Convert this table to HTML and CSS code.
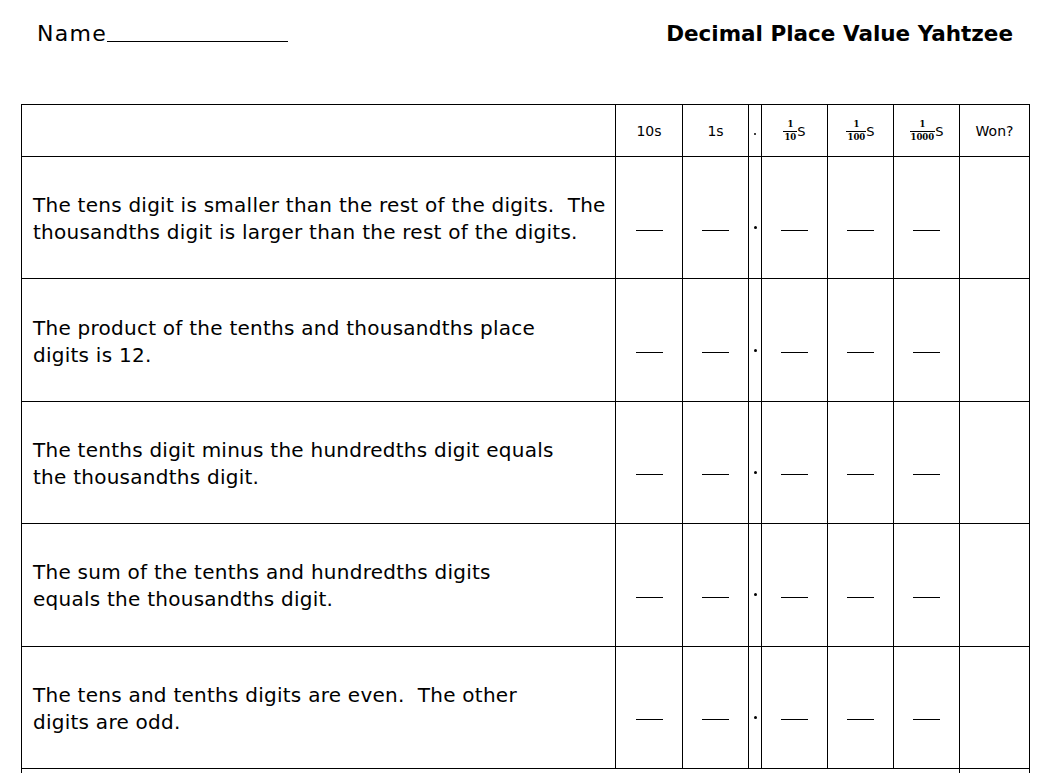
FILE: index.html
```html
<!DOCTYPE html>
<html lang="en">
<head>
<meta charset="utf-8">
<title>Decimal Place Value Yahtzee</title>
<link rel="stylesheet" href="styles.css">
</head>
<body>
<header class="top">
  <div class="name">Name<span class="name-line"></span></div>
  <h1 class="title">Decimal Place Value Yahtzee</h1>
</header>
<table class="sheet">
  <colgroup>
    <col class="c-text"><col class="c-10"><col class="c-1"><col class="c-dot"><col class="c-tenth"><col class="c-hund"><col class="c-thou"><col class="c-won">
  </colgroup>
  <thead>
    <tr>
      <th></th>
      <th class="h">10s</th>
      <th class="h">1s</th>
      <th class="hdot"><span class="pt pt-head"></span></th>
      <th class="h"><span class="frac"><span class="num">1</span><span class="den">10</span></span><span class="fs">S</span></th>
      <th class="h"><span class="frac"><span class="num">1</span><span class="den">100</span></span><span class="fs">S</span></th>
      <th class="h"><span class="frac"><span class="num">1</span><span class="den">1000</span></span><span class="fs">S</span></th>
      <th class="h won">Won?</th>
    </tr>
  </thead>
  <tbody>
    <tr>
      <td class="q">The tens digit is smaller than the rest of the digits.&nbsp; The<br>thousandths digit is larger than the rest of the digits.</td>
      <td><span class="blank"></span></td><td><span class="blank"></span></td><td class="d"><span class="pt"></span></td>
      <td><span class="blank"></span></td><td><span class="blank"></span></td><td><span class="blank"></span></td><td></td>
    </tr>
    <tr>
      <td class="q">The product of the tenths and thousandths place<br>digits is 12.</td>
      <td><span class="blank"></span></td><td><span class="blank"></span></td><td class="d"><span class="pt"></span></td>
      <td><span class="blank"></span></td><td><span class="blank"></span></td><td><span class="blank"></span></td><td></td>
    </tr>
    <tr>
      <td class="q">The tenths digit minus the hundredths digit equals<br>the thousandths digit.</td>
      <td><span class="blank"></span></td><td><span class="blank"></span></td><td class="d"><span class="pt"></span></td>
      <td><span class="blank"></span></td><td><span class="blank"></span></td><td><span class="blank"></span></td><td></td>
    </tr>
    <tr>
      <td class="q">The sum of the tenths and hundredths digits<br>equals the thousandths digit.</td>
      <td><span class="blank"></span></td><td><span class="blank"></span></td><td class="d"><span class="pt"></span></td>
      <td><span class="blank"></span></td><td><span class="blank"></span></td><td><span class="blank"></span></td><td></td>
    </tr>
    <tr>
      <td class="q">The tens and tenths digits are even.&nbsp; The other<br>digits are odd.</td>
      <td><span class="blank"></span></td><td><span class="blank"></span></td><td class="d"><span class="pt"></span></td>
      <td><span class="blank"></span></td><td><span class="blank"></span></td><td><span class="blank"></span></td><td></td>
    </tr>
    <tr>
      <td class="q" colspan="7"></td>
      <td></td>
    </tr>
  </tbody>
</table>
</body>
</html>
```
FILE: styles.css
```css
html, body {
  margin: 0;
  padding: 0;
  background: #fff;
  color: #000;
}
body {
  font-family: "DejaVu Sans", "Liberation Sans", sans-serif;
  width: 1040px;
  height: 773px;
  overflow: hidden;
}
.top {
  display: flex;
  justify-content: space-between;
  align-items: flex-end;
  padding: 21px 27px 0 37px;
  height: 26px;
}
.name {
  font-size: 22px;
  line-height: 26px;
  letter-spacing: 1.3px;
  display: flex;
  align-items: baseline;
}
.name-line {
  display: inline-block;
  width: 181px;
  border-bottom: 1px solid #000;
  margin-left: 0;
  position: relative;
  top: 1px;
}
.title {
  margin: 0;
  font-size: 21.5px;
  line-height: 26px;
  font-weight: bold;
}
.sheet {
  margin: 57px 0 0 21px;
  border-collapse: collapse;
  table-layout: fixed;
  width: 1009px;
}
.sheet th, .sheet td {
  border: 1px solid #000;
  padding: 0;
  text-align: center;
  vertical-align: middle;
}
.c-text { width: 594px; }
.c-10 { width: 67px; }
.c-1 { width: 66px; }
.c-dot { width: 13px; }
.c-tenth, .c-hund, .c-thou { width: 66px; }
.c-won { width: 70px; }
.sheet thead th {
  height: 51px;
  font-weight: normal;
  font-size: 14px;
}
.sheet tbody td {
  height: 121.4px;
}
.sheet tbody td.q {
  height: 118.4px;
  text-align: left;
  padding: 3px 0 0 11px;
  font-size: 20px;
  line-height: 27px;
  letter-spacing: 0.25px;
  white-space: nowrap;
}
.won { font-size: 15px; }
.blank {
  display: block;
  width: 27px;
  height: 25px;
  margin: 0 auto;
  border-bottom: 1px solid #000;
}
.pt {
  display: block;
  width: 3px;
  height: 3px;
  border-radius: 50%;
  background: #000;
  margin: 20px auto 0;
}
.pt-head {
  width: 2px;
  height: 2px;
  margin-top: 6px;
}
.frac {
  display: inline-flex;
  flex-direction: column;
  align-items: center;
  vertical-align: middle;
  font-family: "DejaVu Serif", serif;
  font-weight: bold;
  font-size: 8.5px;
  line-height: 9px;
}
.num {
  padding: 0 1px 1px;
}
.den {
  border-top: 1px solid #000;
  padding: 1px 1px 0;
  margin-top: 1px;
}
.fs {
  font-size: 13px;
  vertical-align: middle;
}
```
